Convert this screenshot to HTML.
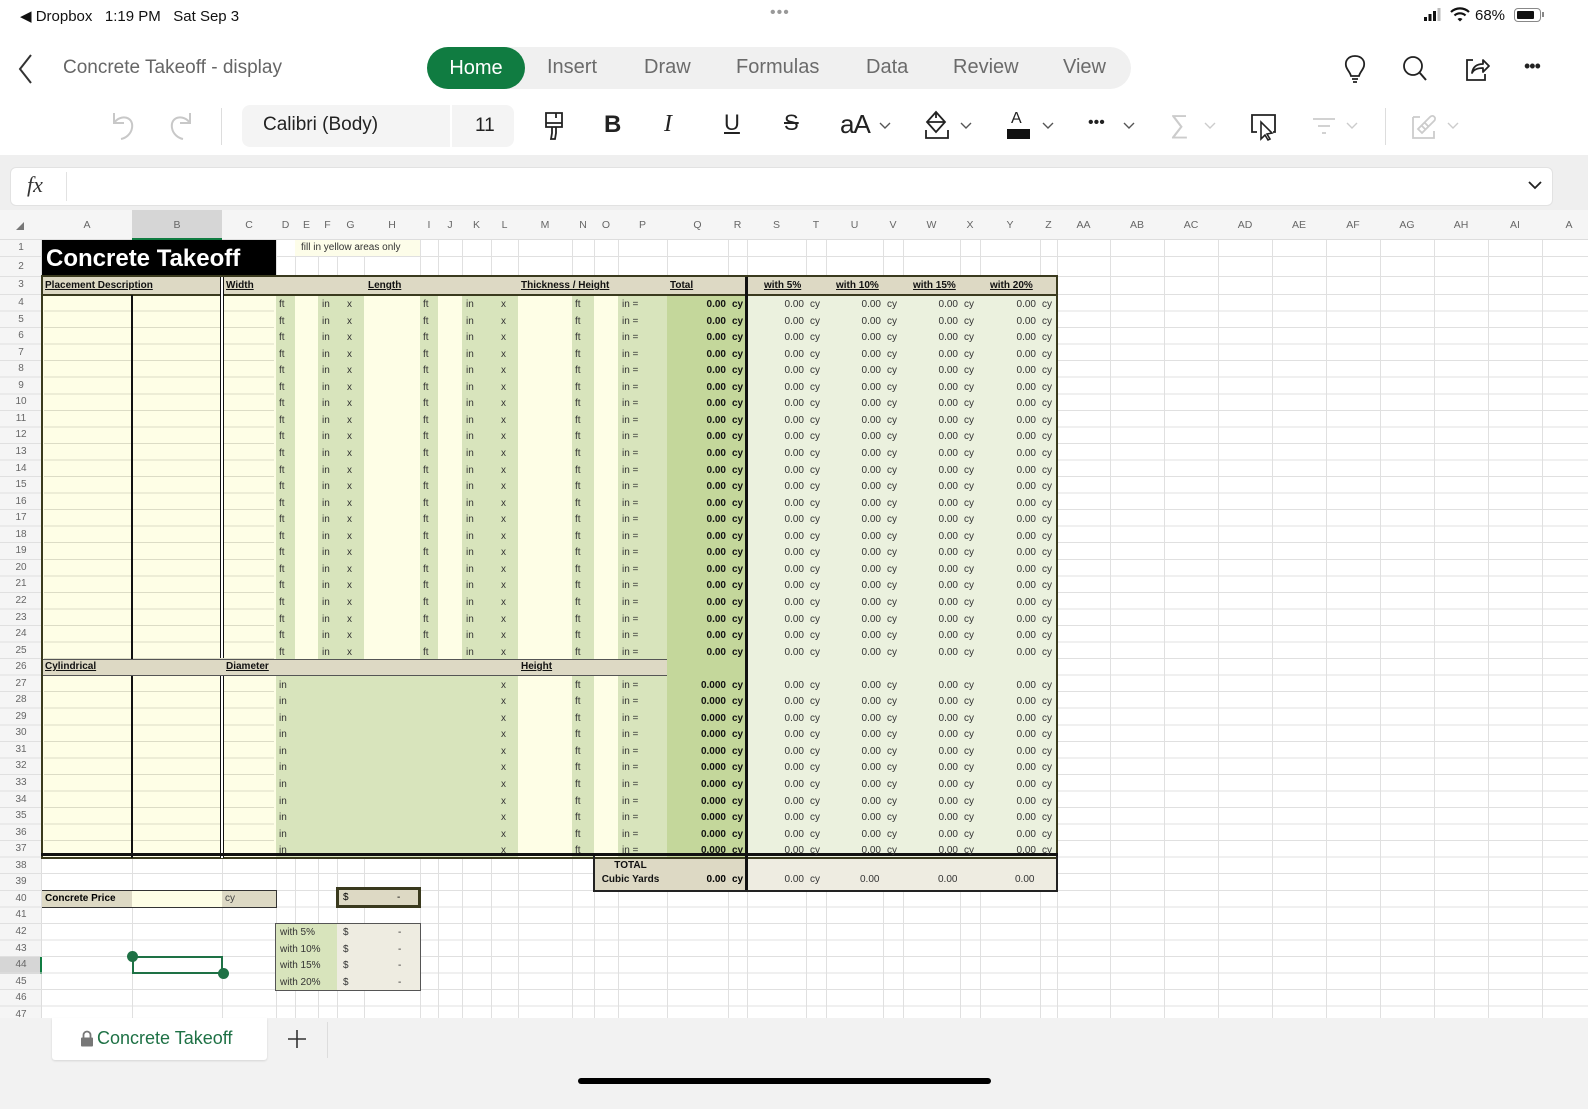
<!DOCTYPE html>
<html><head><meta charset="utf-8">
<style>
*{margin:0;padding:0;box-sizing:border-box}
body{width:1588px;height:1109px;position:relative;overflow:hidden;background:#fff;font-family:"Liberation Sans",sans-serif}
.abs{position:absolute}
.tb{position:absolute;top:56px;font-size:20px;color:#6b6b6b}
.hd{position:absolute;top:210px;height:30px;background:#f5f5f5;border-bottom:1px solid #ddd}
.cl{position:absolute;top:219px;font-size:10.5px;color:#666;text-align:center}
.rn{position:absolute;left:0;width:42px;text-align:center;font-size:10px;color:#666;line-height:16px}
.vl{position:absolute;top:240px;width:1px;height:778px;background:#e0e0e0}
.f{position:absolute}
.r{position:absolute;left:0;width:1060px;height:16px;font-size:10px;color:#333;line-height:16px}
.r i{font-style:normal;position:absolute;top:1px}
.a{left:279px}.b{left:322px}.c{left:347px}.d{left:423px}.e{left:466px}.ff{left:501px}.g{left:575px}.h{left:622px}
.q{left:667px;width:59px;text-align:right;font-weight:bold;color:#111}.qc{left:732px;font-weight:bold;color:#111}
.s{left:747px;width:57px;text-align:right}.sc{left:810px}
.u{left:826px;width:55px;text-align:right}.uc{left:887px}
.w{left:903px;width:55px;text-align:right}.wc{left:964px}
.y{left:980px;width:56px;text-align:right}.yc{left:1042px}
.bh{font-size:10px;font-weight:bold;text-decoration:underline;position:absolute;color:#111}
</style></head><body>
<div class="abs" style="left:20px;top:7px;font-size:15px;color:#111">◀ Dropbox&nbsp;&nbsp; 1:19 PM&nbsp;&nbsp; Sat Sep 3</div>
<div class="abs" style="left:770px;top:4px;font-size:16px;color:#999;letter-spacing:1px">•••</div>
<div class="abs" style="left:1424px;top:8px;width:18px;height:14px">
<svg width="18" height="14"><rect x="0" y="9" width="3" height="4" fill="#111"/><rect x="4.5" y="6" width="3" height="7" fill="#111"/><rect x="9" y="3" width="3" height="10" fill="#111"/><rect x="13.5" y="0" width="3" height="13" fill="#bbb"/></svg></div>
<div class="abs" style="left:1450px;top:6px"><svg width="20" height="16"><path d="M1 6 A13 13 0 0 1 19 6" stroke="#111" stroke-width="2.2" fill="none"/><path d="M4.5 9.5 A8 8 0 0 1 15.5 9.5" stroke="#111" stroke-width="2.2" fill="none"/><path d="M7.5 13 L10 15.5 L12.5 13 A4 4 0 0 0 7.5 13Z" fill="#111"/></svg></div>
<div class="abs" style="left:1475px;top:7px;font-size:15px;color:#111">68%</div>
<div class="abs" style="left:1514px;top:8px;width:27px;height:14px;border:1.5px solid #888;border-radius:4px"><div style="margin:1.5px;width:17px;height:8px;background:#111;border-radius:1px"></div></div>
<div class="abs" style="left:1542px;top:12px;width:2px;height:5px;background:#888"></div>

<svg class="abs" style="left:16px;top:53px" width="20" height="32"><path d="M15 2 L4 16 L15 30" stroke="#333" stroke-width="2" fill="none"/></svg>
<div class="abs" style="left:63px;top:57px;font-size:19px;color:#666">Concrete Takeoff - display</div>
<div class="abs" style="left:427px;top:47px;width:704px;height:42px;border-radius:21px;background:#f0f0f0"></div>
<div class="abs" style="left:427px;top:47px;width:98px;height:42px;border-radius:21px;background:#107c41;color:#fff;font-size:20px;text-align:center;line-height:42px">Home</div>
<div class="tb" style="left:547px">Insert</div>
<div class="tb" style="left:644px">Draw</div>
<div class="tb" style="left:736px">Formulas</div>
<div class="tb" style="left:866px">Data</div>
<div class="tb" style="left:953px">Review</div>
<div class="tb" style="left:1063px">View</div>
<svg class="abs" style="left:1343px;top:54px" width="24" height="30"><path d="M12 2 C5 2 2 7 3 12 C4 16 7 18 8 22 L16 22 C17 18 20 16 21 12 C22 7 19 2 12 2Z M9 25 L15 25 M10 28 L14 28" stroke="#222" stroke-width="1.8" fill="none"/></svg>
<svg class="abs" style="left:1402px;top:55px" width="26" height="28"><circle cx="11" cy="11" r="9" stroke="#222" stroke-width="1.8" fill="none"/><path d="M17.5 17.5 L24 25" stroke="#222" stroke-width="2"/></svg>
<svg class="abs" style="left:1463px;top:55px" width="28" height="28"><path d="M10 5 L4 5 L4 25 L22 25 L22 19" stroke="#222" stroke-width="1.8" fill="none"/><path d="M9 18 C10 11 15 9 20 9 L20 5 L26 11 L20 17 L20 13 C15 13 11 14 9 18Z" stroke="#222" stroke-width="1.8" fill="none" stroke-linejoin="round"/></svg>
<div class="abs" style="left:1524px;top:56px;font-size:18px;color:#222;letter-spacing:-1px">•••</div>

<svg class="abs" style="left:108px;top:110px" width="30" height="32"><path d="M6 3 L6 13 L16 13 M6 13 C12 4 26 6 24 18 C23 24 18 28 13 29" stroke="#c8c8c8" stroke-width="2" fill="none"/></svg>
<svg class="abs" style="left:166px;top:110px" width="30" height="32"><path d="M24 3 L24 13 L14 13 M24 13 C18 4 4 6 6 18 C7 24 12 28 17 29" stroke="#c8c8c8" stroke-width="2" fill="none"/></svg>
<div class="abs" style="left:221px;top:108px;width:1px;height:37px;background:#ddd"></div>
<div class="abs" style="left:242px;top:105px;width:208px;height:42px;background:#f4f4f4;border-radius:8px 0 0 8px"></div>
<div class="abs" style="left:452px;top:105px;width:62px;height:42px;background:#f4f4f4;border-radius:0 8px 8px 0"></div>
<div class="abs" style="left:263px;top:114px;font-size:19px;color:#222">Calibri (Body)</div>
<div class="abs" style="left:475px;top:115px;font-size:19px;color:#222">11</div>
<svg class="abs" style="left:542px;top:111px" width="24" height="32"><path d="M4 2 L20 2 L20 16 L4 16Z M4 12 L20 12 M10 16 L10 22 L9 28 L13 28 L14 22 L14 16 M14 2 L14 7" stroke="#222" stroke-width="1.8" fill="none"/></svg>
<div class="abs" style="left:604px;top:111px;font-size:24px;font-weight:bold;color:#222">B</div>
<div class="abs" style="left:664px;top:111px;font-size:24px;font-style:italic;color:#222;font-family:'Liberation Serif',serif">I</div>
<div class="abs" style="left:724px;top:110px;font-size:22px;color:#222;text-decoration:underline">U</div>
<div class="abs" style="left:784px;top:110px;font-size:22px;color:#222;text-decoration:line-through">S</div>
<div class="abs" style="left:840px;top:109px;font-size:26px;color:#222;letter-spacing:-1px">aA</div>
<svg class="abs" style="left:879px;top:122px" width="12" height="8"><path d="M1 1 L6 6 L11 1" stroke="#555" stroke-width="1.4" fill="none"/></svg>
<svg class="abs" style="left:922px;top:108px" width="30" height="34"><path d="M14 4 L5 14 L14 24 L23 14Z M14 4 L14 10 M5 14 L23 14" stroke="#222" stroke-width="1.8" fill="none"/><path d="M4 22 L4 30 L26 30 L26 22" stroke="#222" stroke-width="1.8" fill="none"/></svg>
<svg class="abs" style="left:960px;top:122px" width="12" height="8"><path d="M1 1 L6 6 L11 1" stroke="#555" stroke-width="1.4" fill="none"/></svg>
<div class="abs" style="left:1011px;top:110px;font-size:16px;color:#222">A</div>
<div class="abs" style="left:1007px;top:129px;width:23px;height:10px;background:#111"></div>
<svg class="abs" style="left:1042px;top:122px" width="12" height="8"><path d="M1 1 L6 6 L11 1" stroke="#555" stroke-width="1.4" fill="none"/></svg>
<div class="abs" style="left:1088px;top:114px;font-size:16px;color:#222">•••</div>
<svg class="abs" style="left:1123px;top:122px" width="12" height="8"><path d="M1 1 L6 6 L11 1" stroke="#555" stroke-width="1.4" fill="none"/></svg>
<div class="abs" style="left:1170px;top:109px;font-size:26px;color:#ccc">∑</div>
<svg class="abs" style="left:1204px;top:122px" width="12" height="8"><path d="M1 1 L6 6 L11 1" stroke="#ccc" stroke-width="1.4" fill="none"/></svg>
<svg class="abs" style="left:1249px;top:112px" width="30" height="30"><path d="M8 20 L3 20 L3 3 L26 3 L26 20 L24 20" stroke="#222" stroke-width="1.8" fill="none"/><path d="M12 10 L12 27 L16 23 L19 28 L21 27 L18 22 L23 21Z" stroke="#222" stroke-width="1.6" fill="#fff"/></svg>
<svg class="abs" style="left:1311px;top:116px" width="26" height="22"><path d="M2 3 L24 3 M7 10 L19 10 M11 17 L15 17" stroke="#ccc" stroke-width="1.8"/></svg>
<svg class="abs" style="left:1346px;top:122px" width="12" height="8"><path d="M1 1 L6 6 L11 1" stroke="#ccc" stroke-width="1.4" fill="none"/></svg>
<div class="abs" style="left:1385px;top:108px;width:1px;height:37px;background:#ddd"></div>
<svg class="abs" style="left:1410px;top:111px" width="30" height="30"><path d="M3 6 L3 27 L24 27 L24 20 M3 6 L10 6" stroke="#ccc" stroke-width="1.8" fill="none"/><path d="M8 18 L20 6 C23 3 27 7 24 10 L12 22Z M11 14 L16 19 M14 11 L19 16" stroke="#ccc" stroke-width="1.8" fill="none"/></svg>
<svg class="abs" style="left:1447px;top:122px" width="12" height="8"><path d="M1 1 L6 6 L11 1" stroke="#ccc" stroke-width="1.4" fill="none"/></svg>

<div class="abs" style="left:0;top:155px;width:1588px;height:55px;background:#efefef"></div>
<div class="abs" style="left:10px;top:167px;width:1543px;height:39px;background:#fff;border:1px solid #e2e2e2;border-radius:6px"></div>
<div class="abs" style="left:66px;top:172px;width:1px;height:29px;background:#e2e2e2"></div>
<div class="abs" style="left:27px;top:172px;font-size:22px;font-style:italic;font-family:'Liberation Serif',serif;color:#333">fx</div>
<svg class="abs" style="left:1527px;top:179px" width="16" height="12"><path d="M2 3 L8 9 L14 3" stroke="#222" stroke-width="1.8" fill="none"/></svg>

<div class="hd" style="left:0;width:1588px"></div>
<div class="abs" style="left:132px;top:210px;width:90px;height:30px;background:#d6d6d6;border-bottom:2px solid #107c41"></div>
<svg class="abs" style="left:15px;top:221px" width="10" height="10"><path d="M9 1 L9 9 L1 9Z" fill="#777"/></svg>
<div class="cl" style="left:42px;width:90px">A</div><div class="cl" style="left:132px;width:90px">B</div><div class="cl" style="left:222px;width:54px">C</div><div class="cl" style="left:276px;width:19px">D</div><div class="cl" style="left:295px;width:23px">E</div><div class="cl" style="left:318px;width:19px">F</div><div class="cl" style="left:337px;width:27px">G</div><div class="cl" style="left:364px;width:56px">H</div><div class="cl" style="left:420px;width:18px">I</div><div class="cl" style="left:438px;width:24px">J</div><div class="cl" style="left:462px;width:29px">K</div><div class="cl" style="left:491px;width:27px">L</div><div class="cl" style="left:518px;width:54px">M</div><div class="cl" style="left:572px;width:22px">N</div><div class="cl" style="left:594px;width:24px">O</div><div class="cl" style="left:618px;width:49px">P</div><div class="cl" style="left:667px;width:61px">Q</div><div class="cl" style="left:728px;width:19px">R</div><div class="cl" style="left:747px;width:59px">S</div><div class="cl" style="left:806px;width:20px">T</div><div class="cl" style="left:826px;width:57px">U</div><div class="cl" style="left:883px;width:20px">V</div><div class="cl" style="left:903px;width:57px">W</div><div class="cl" style="left:960px;width:20px">X</div><div class="cl" style="left:980px;width:60px">Y</div><div class="cl" style="left:1040px;width:17px">Z</div><div class="cl" style="left:1057px;width:53px">AA</div><div class="cl" style="left:1110px;width:54px">AB</div><div class="cl" style="left:1164px;width:54px">AC</div><div class="cl" style="left:1218px;width:54px">AD</div><div class="cl" style="left:1272px;width:54px">AE</div><div class="cl" style="left:1326px;width:54px">AF</div><div class="cl" style="left:1380px;width:54px">AG</div><div class="cl" style="left:1434px;width:54px">AH</div><div class="cl" style="left:1488px;width:54px">AI</div><div class="cl" style="left:1542px;width:54px">A</div>

<div class="abs" style="left:0;top:240px;width:42px;height:778px;background:#f5f5f5;border-right:1px solid #ddd"></div>
<div class="abs" style="left:0;top:957px;width:42px;height:17px;background:#d6d6d6;border-right:2px solid #107c41"></div>

<div class="abs" style="left:0;top:256px;width:1588px;height:1px;background:#e0e0e0"></div>
<div class="abs" style="left:0;top:276px;width:1588px;height:1px;background:#e0e0e0"></div>
<div class="abs" style="left:0;top:294px;width:1588px;height:724px;background:repeating-linear-gradient(to bottom,#e0e0e0 0,#e0e0e0 1px,transparent 1px,transparent 16.55px)"></div>
<div class="vl" style="left:132px"></div><div class="vl" style="left:222px"></div><div class="vl" style="left:276px"></div><div class="vl" style="left:295px"></div><div class="vl" style="left:318px"></div><div class="vl" style="left:337px"></div><div class="vl" style="left:364px"></div><div class="vl" style="left:420px"></div><div class="vl" style="left:438px"></div><div class="vl" style="left:462px"></div><div class="vl" style="left:491px"></div><div class="vl" style="left:518px"></div><div class="vl" style="left:572px"></div><div class="vl" style="left:594px"></div><div class="vl" style="left:618px"></div><div class="vl" style="left:667px"></div><div class="vl" style="left:728px"></div><div class="vl" style="left:747px"></div><div class="vl" style="left:806px"></div><div class="vl" style="left:826px"></div><div class="vl" style="left:883px"></div><div class="vl" style="left:903px"></div><div class="vl" style="left:960px"></div><div class="vl" style="left:980px"></div><div class="vl" style="left:1040px"></div><div class="vl" style="left:1057px"></div><div class="vl" style="left:1110px"></div><div class="vl" style="left:1164px"></div><div class="vl" style="left:1218px"></div><div class="vl" style="left:1272px"></div><div class="vl" style="left:1326px"></div><div class="vl" style="left:1380px"></div><div class="vl" style="left:1434px"></div><div class="vl" style="left:1488px"></div><div class="vl" style="left:1542px"></div>

<div class="rn" style="top:240px">1</div><div class="rn" style="top:259px">2</div><div class="rn" style="top:277px">3</div>
<div class="rn" style="top:295px">4</div><div class="rn" style="top:311.6px">5</div><div class="rn" style="top:328.1px">6</div><div class="rn" style="top:344.7px">7</div><div class="rn" style="top:361.2px">8</div><div class="rn" style="top:377.8px">9</div><div class="rn" style="top:394.3px">10</div><div class="rn" style="top:410.9px">11</div><div class="rn" style="top:427.4px">12</div><div class="rn" style="top:444px">13</div><div class="rn" style="top:460.5px">14</div><div class="rn" style="top:477.1px">15</div><div class="rn" style="top:493.6px">16</div><div class="rn" style="top:510.2px">17</div><div class="rn" style="top:526.7px">18</div><div class="rn" style="top:543.3px">19</div><div class="rn" style="top:559.8px">20</div><div class="rn" style="top:576.4px">21</div><div class="rn" style="top:592.9px">22</div><div class="rn" style="top:609.5px">23</div><div class="rn" style="top:626px">24</div><div class="rn" style="top:642.6px">25</div><div class="rn" style="top:659.1px">26</div><div class="rn" style="top:675.7px">27</div><div class="rn" style="top:692.2px">28</div><div class="rn" style="top:708.8px">29</div><div class="rn" style="top:725.3px">30</div><div class="rn" style="top:741.9px">31</div><div class="rn" style="top:758.4px">32</div><div class="rn" style="top:775px">33</div><div class="rn" style="top:791.5px">34</div><div class="rn" style="top:808.1px">35</div><div class="rn" style="top:824.6px">36</div><div class="rn" style="top:841.2px">37</div><div class="rn" style="top:857.7px">38</div><div class="rn" style="top:874.3px">39</div><div class="rn" style="top:890.8px">40</div><div class="rn" style="top:907.4px">41</div><div class="rn" style="top:923.9px">42</div><div class="rn" style="top:940.5px">43</div><div class="rn" style="top:957px">44</div><div class="rn" style="top:973.6px">45</div><div class="rn" style="top:990.1px">46</div><div class="rn" style="top:1006.7px">47</div>

<div class="f" style="left:42px;top:240px;width:234px;height:35px;background:#000;color:#fff;font-weight:bold;font-size:24px;line-height:38px;padding-left:4px">Concrete Takeoff</div>
<div class="f" style="left:295px;top:240px;width:125px;height:16px;background:#fdfde9;font-size:10px;line-height:16px;padding-left:6px;color:#333">fill in yellow areas only</div>

<div class="f" style="left:42px;top:295px;width:234px;height:364px;background:#fefee6"></div>
<div class="f" style="left:276px;top:295px;width:19px;height:364px;background:#d8e4bc"></div>
<div class="f" style="left:295px;top:295px;width:23px;height:364px;background:#fefee6"></div>
<div class="f" style="left:318px;top:295px;width:46px;height:364px;background:#d8e4bc"></div>
<div class="f" style="left:364px;top:295px;width:56px;height:364px;background:#fefee6"></div>
<div class="f" style="left:420px;top:295px;width:18px;height:364px;background:#d8e4bc"></div>
<div class="f" style="left:438px;top:295px;width:24px;height:364px;background:#fefee6"></div>
<div class="f" style="left:462px;top:295px;width:56px;height:364px;background:#d8e4bc"></div>
<div class="f" style="left:518px;top:295px;width:54px;height:364px;background:#fefee6"></div>
<div class="f" style="left:572px;top:295px;width:22px;height:364px;background:#d8e4bc"></div>
<div class="f" style="left:594px;top:295px;width:24px;height:364px;background:#fefee6"></div>
<div class="f" style="left:618px;top:295px;width:49px;height:364px;background:#d8e4bc"></div>
<div class="f" style="left:42px;top:676px;width:234px;height:182px;background:#fefee6"></div>
<div class="f" style="left:276px;top:676px;width:242px;height:182px;background:#d8e4bc"></div>
<div class="f" style="left:518px;top:676px;width:54px;height:182px;background:#fefee6"></div>
<div class="f" style="left:572px;top:676px;width:22px;height:182px;background:#d8e4bc"></div>
<div class="f" style="left:594px;top:676px;width:24px;height:182px;background:#fefee6"></div>
<div class="f" style="left:618px;top:676px;width:49px;height:182px;background:#d8e4bc"></div>
<div class="f" style="left:44px;top:295px;width:230px;height:560px;background:repeating-linear-gradient(to bottom,transparent 0,transparent 15.55px,rgba(120,120,100,.25) 15.55px,rgba(120,120,100,.25) 16.55px)"></div>
<div class="f" style="left:667px;top:295px;width:80px;height:563px;background:#c4d79b"></div>
<div class="f" style="left:747px;top:295px;width:310px;height:563px;background:#ebf1de"></div>
<div class="f" style="left:42px;top:277px;width:1015px;height:18px;background:#ddd9c4"></div>
<div class="bh" style="left:45px;top:280px">Placement Description</div>
<div class="bh" style="left:226px;top:280px">Width</div>
<div class="bh" style="left:368px;top:280px">Length</div>
<div class="bh" style="left:521px;top:280px">Thickness / Height</div>
<div class="bh" style="left:670px;top:280px">Total</div>
<div class="bh" style="left:764px;top:280px">with 5%</div>
<div class="bh" style="left:836px;top:280px">with 10%</div>
<div class="bh" style="left:913px;top:280px">with 15%</div>
<div class="bh" style="left:990px;top:280px">with 20%</div>
<div class="f" style="left:42px;top:659px;width:625px;height:17px;background:#ddd9c4;border-top:1px solid #555;border-bottom:1px solid #555"></div>
<div class="bh" style="left:45px;top:661px">Cylindrical</div>
<div class="bh" style="left:226px;top:661px">Diameter</div>
<div class="bh" style="left:521px;top:661px">Height</div>
<div class="f" style="left:594px;top:858px;width:463px;height:33px;background:#eeece1"></div>
<div class="f" style="left:594px;top:858px;width:73px;height:33px;background:#ddd9c4"></div>
<div class="f" style="left:667px;top:858px;width:80px;height:33px;background:#ddd9c4"></div>
<div class="abs" style="left:594px;top:859px;width:73px;text-align:center;font-size:10px;font-weight:bold;line-height:14px;color:#111">TOTAL<br>Cubic Yards</div>
<div class="abs" style="left:667px;top:874px;width:59px;text-align:right;font-size:10px;font-weight:bold">0.00</div>
<div class="abs" style="left:732px;top:874px;font-size:10px;font-weight:bold">cy</div>
<div class="abs" style="left:747px;top:874px;width:57px;text-align:right;font-size:10px;color:#333">0.00</div>
<div class="abs" style="left:810px;top:874px;font-size:10px;color:#333">cy</div>
<div class="abs" style="left:860px;top:874px;font-size:10px;color:#333">0.00</div>
<div class="abs" style="left:938px;top:874px;font-size:10px;color:#333">0.00</div>
<div class="abs" style="left:1015px;top:874px;font-size:10px;color:#333">0.00</div>

<div class="f" style="left:41px;top:275px;width:1017px;height:584px;border:2px solid #3a3a1e"></div>
<div class="f" style="left:41px;top:294px;width:1017px;height:2px;background:#3a3a1e"></div>
<div class="f" style="left:131px;top:295px;width:2px;height:364px;background:#111"></div>
<div class="f" style="left:131px;top:676px;width:2px;height:182px;background:#111"></div>
<div class="f" style="left:220px;top:277px;width:4px;height:381px;background:linear-gradient(to right,#111 0,#111 1px,#fff 1px,#fff 3px,#111 3px)"></div>
<div class="f" style="left:220px;top:676px;width:4px;height:182px;background:linear-gradient(to right,#111 0,#111 1px,#fff 1px,#fff 3px,#111 3px)"></div>
<div class="f" style="left:745px;top:277px;width:3px;height:614px;background:#111"></div>
<div class="f" style="left:41px;top:853px;width:1017px;height:3px;background:#111"></div>
<div class="f" style="left:593px;top:856px;width:465px;height:36px;border:2px solid #222;border-top:none"></div>

<div class="f" style="left:42px;top:891px;width:90px;height:16px;background:#ddd9c4;font-size:10px;font-weight:bold;line-height:16px;padding-left:3px">Concrete Price</div>
<div class="f" style="left:132px;top:891px;width:90px;height:16px;background:#fefee6"></div>
<div class="f" style="left:222px;top:891px;width:54px;height:16px;background:#ddd9c4;font-size:10px;line-height:16px;padding-left:3px;color:#444">cy</div>
<div class="f" style="left:42px;top:890px;width:235px;height:18px;border-top:1px solid #333;border-bottom:1px solid #333;border-right:1px solid #333"></div>
<div class="f" style="left:336px;top:887px;width:85px;height:21px;background:#ddd9c4;border:3px solid #3a3a1e;font-size:10px;line-height:15px;padding-left:4px">$<span style="position:absolute;left:58px">-</span></div>
<div class="f" style="left:276px;top:924px;width:61px;height:66px;background:#d8e4bc"></div>
<div class="f" style="left:337px;top:924px;width:83px;height:66px;background:#eeece1"></div>
<div class="f" style="left:275px;top:923px;width:146px;height:68px;border:1px solid #555"></div>
<div class="abs" style="left:280px;top:925px;font-size:10px;line-height:16.55px;color:#333">with 5%<br>with 10%<br>with 15%<br>with 20%</div>
<div class="abs" style="left:343px;top:925px;font-size:10px;line-height:16.55px;color:#333">$<br>$<br>$<br>$</div>
<div class="abs" style="left:398px;top:925px;font-size:10px;line-height:16.55px;color:#333">-<br>-<br>-<br>-</div>
<div class="f" style="left:132px;top:956px;width:91px;height:18px;border:2px solid #1e7145"></div>
<div class="f" style="left:127px;top:951px;width:11px;height:11px;border-radius:50%;background:#1e7145"></div>
<div class="f" style="left:218px;top:968px;width:11px;height:11px;border-radius:50%;background:#1e7145"></div>

<div class="r" style="top:296px"><i class=a>ft</i><i class=b>in</i><i class=c>x</i><i class=d>ft</i><i class=e>in</i><i class=ff>x</i><i class=g>ft</i><i class=h>in =</i><i class=q>0.00</i><i class=qc>cy</i><i class=s>0.00</i><i class=sc>cy</i><i class=u>0.00</i><i class=uc>cy</i><i class=w>0.00</i><i class=wc>cy</i><i class=y>0.00</i><i class=yc>cy</i></div>
<div class="r" style="top:312.6px"><i class=a>ft</i><i class=b>in</i><i class=c>x</i><i class=d>ft</i><i class=e>in</i><i class=ff>x</i><i class=g>ft</i><i class=h>in =</i><i class=q>0.00</i><i class=qc>cy</i><i class=s>0.00</i><i class=sc>cy</i><i class=u>0.00</i><i class=uc>cy</i><i class=w>0.00</i><i class=wc>cy</i><i class=y>0.00</i><i class=yc>cy</i></div>
<div class="r" style="top:329.1px"><i class=a>ft</i><i class=b>in</i><i class=c>x</i><i class=d>ft</i><i class=e>in</i><i class=ff>x</i><i class=g>ft</i><i class=h>in =</i><i class=q>0.00</i><i class=qc>cy</i><i class=s>0.00</i><i class=sc>cy</i><i class=u>0.00</i><i class=uc>cy</i><i class=w>0.00</i><i class=wc>cy</i><i class=y>0.00</i><i class=yc>cy</i></div>
<div class="r" style="top:345.7px"><i class=a>ft</i><i class=b>in</i><i class=c>x</i><i class=d>ft</i><i class=e>in</i><i class=ff>x</i><i class=g>ft</i><i class=h>in =</i><i class=q>0.00</i><i class=qc>cy</i><i class=s>0.00</i><i class=sc>cy</i><i class=u>0.00</i><i class=uc>cy</i><i class=w>0.00</i><i class=wc>cy</i><i class=y>0.00</i><i class=yc>cy</i></div>
<div class="r" style="top:362.2px"><i class=a>ft</i><i class=b>in</i><i class=c>x</i><i class=d>ft</i><i class=e>in</i><i class=ff>x</i><i class=g>ft</i><i class=h>in =</i><i class=q>0.00</i><i class=qc>cy</i><i class=s>0.00</i><i class=sc>cy</i><i class=u>0.00</i><i class=uc>cy</i><i class=w>0.00</i><i class=wc>cy</i><i class=y>0.00</i><i class=yc>cy</i></div>
<div class="r" style="top:378.8px"><i class=a>ft</i><i class=b>in</i><i class=c>x</i><i class=d>ft</i><i class=e>in</i><i class=ff>x</i><i class=g>ft</i><i class=h>in =</i><i class=q>0.00</i><i class=qc>cy</i><i class=s>0.00</i><i class=sc>cy</i><i class=u>0.00</i><i class=uc>cy</i><i class=w>0.00</i><i class=wc>cy</i><i class=y>0.00</i><i class=yc>cy</i></div>
<div class="r" style="top:395.3px"><i class=a>ft</i><i class=b>in</i><i class=c>x</i><i class=d>ft</i><i class=e>in</i><i class=ff>x</i><i class=g>ft</i><i class=h>in =</i><i class=q>0.00</i><i class=qc>cy</i><i class=s>0.00</i><i class=sc>cy</i><i class=u>0.00</i><i class=uc>cy</i><i class=w>0.00</i><i class=wc>cy</i><i class=y>0.00</i><i class=yc>cy</i></div>
<div class="r" style="top:411.9px"><i class=a>ft</i><i class=b>in</i><i class=c>x</i><i class=d>ft</i><i class=e>in</i><i class=ff>x</i><i class=g>ft</i><i class=h>in =</i><i class=q>0.00</i><i class=qc>cy</i><i class=s>0.00</i><i class=sc>cy</i><i class=u>0.00</i><i class=uc>cy</i><i class=w>0.00</i><i class=wc>cy</i><i class=y>0.00</i><i class=yc>cy</i></div>
<div class="r" style="top:428.4px"><i class=a>ft</i><i class=b>in</i><i class=c>x</i><i class=d>ft</i><i class=e>in</i><i class=ff>x</i><i class=g>ft</i><i class=h>in =</i><i class=q>0.00</i><i class=qc>cy</i><i class=s>0.00</i><i class=sc>cy</i><i class=u>0.00</i><i class=uc>cy</i><i class=w>0.00</i><i class=wc>cy</i><i class=y>0.00</i><i class=yc>cy</i></div>
<div class="r" style="top:445px"><i class=a>ft</i><i class=b>in</i><i class=c>x</i><i class=d>ft</i><i class=e>in</i><i class=ff>x</i><i class=g>ft</i><i class=h>in =</i><i class=q>0.00</i><i class=qc>cy</i><i class=s>0.00</i><i class=sc>cy</i><i class=u>0.00</i><i class=uc>cy</i><i class=w>0.00</i><i class=wc>cy</i><i class=y>0.00</i><i class=yc>cy</i></div>
<div class="r" style="top:461.5px"><i class=a>ft</i><i class=b>in</i><i class=c>x</i><i class=d>ft</i><i class=e>in</i><i class=ff>x</i><i class=g>ft</i><i class=h>in =</i><i class=q>0.00</i><i class=qc>cy</i><i class=s>0.00</i><i class=sc>cy</i><i class=u>0.00</i><i class=uc>cy</i><i class=w>0.00</i><i class=wc>cy</i><i class=y>0.00</i><i class=yc>cy</i></div>
<div class="r" style="top:478.1px"><i class=a>ft</i><i class=b>in</i><i class=c>x</i><i class=d>ft</i><i class=e>in</i><i class=ff>x</i><i class=g>ft</i><i class=h>in =</i><i class=q>0.00</i><i class=qc>cy</i><i class=s>0.00</i><i class=sc>cy</i><i class=u>0.00</i><i class=uc>cy</i><i class=w>0.00</i><i class=wc>cy</i><i class=y>0.00</i><i class=yc>cy</i></div>
<div class="r" style="top:494.6px"><i class=a>ft</i><i class=b>in</i><i class=c>x</i><i class=d>ft</i><i class=e>in</i><i class=ff>x</i><i class=g>ft</i><i class=h>in =</i><i class=q>0.00</i><i class=qc>cy</i><i class=s>0.00</i><i class=sc>cy</i><i class=u>0.00</i><i class=uc>cy</i><i class=w>0.00</i><i class=wc>cy</i><i class=y>0.00</i><i class=yc>cy</i></div>
<div class="r" style="top:511.2px"><i class=a>ft</i><i class=b>in</i><i class=c>x</i><i class=d>ft</i><i class=e>in</i><i class=ff>x</i><i class=g>ft</i><i class=h>in =</i><i class=q>0.00</i><i class=qc>cy</i><i class=s>0.00</i><i class=sc>cy</i><i class=u>0.00</i><i class=uc>cy</i><i class=w>0.00</i><i class=wc>cy</i><i class=y>0.00</i><i class=yc>cy</i></div>
<div class="r" style="top:527.7px"><i class=a>ft</i><i class=b>in</i><i class=c>x</i><i class=d>ft</i><i class=e>in</i><i class=ff>x</i><i class=g>ft</i><i class=h>in =</i><i class=q>0.00</i><i class=qc>cy</i><i class=s>0.00</i><i class=sc>cy</i><i class=u>0.00</i><i class=uc>cy</i><i class=w>0.00</i><i class=wc>cy</i><i class=y>0.00</i><i class=yc>cy</i></div>
<div class="r" style="top:544.3px"><i class=a>ft</i><i class=b>in</i><i class=c>x</i><i class=d>ft</i><i class=e>in</i><i class=ff>x</i><i class=g>ft</i><i class=h>in =</i><i class=q>0.00</i><i class=qc>cy</i><i class=s>0.00</i><i class=sc>cy</i><i class=u>0.00</i><i class=uc>cy</i><i class=w>0.00</i><i class=wc>cy</i><i class=y>0.00</i><i class=yc>cy</i></div>
<div class="r" style="top:560.8px"><i class=a>ft</i><i class=b>in</i><i class=c>x</i><i class=d>ft</i><i class=e>in</i><i class=ff>x</i><i class=g>ft</i><i class=h>in =</i><i class=q>0.00</i><i class=qc>cy</i><i class=s>0.00</i><i class=sc>cy</i><i class=u>0.00</i><i class=uc>cy</i><i class=w>0.00</i><i class=wc>cy</i><i class=y>0.00</i><i class=yc>cy</i></div>
<div class="r" style="top:577.4px"><i class=a>ft</i><i class=b>in</i><i class=c>x</i><i class=d>ft</i><i class=e>in</i><i class=ff>x</i><i class=g>ft</i><i class=h>in =</i><i class=q>0.00</i><i class=qc>cy</i><i class=s>0.00</i><i class=sc>cy</i><i class=u>0.00</i><i class=uc>cy</i><i class=w>0.00</i><i class=wc>cy</i><i class=y>0.00</i><i class=yc>cy</i></div>
<div class="r" style="top:593.9px"><i class=a>ft</i><i class=b>in</i><i class=c>x</i><i class=d>ft</i><i class=e>in</i><i class=ff>x</i><i class=g>ft</i><i class=h>in =</i><i class=q>0.00</i><i class=qc>cy</i><i class=s>0.00</i><i class=sc>cy</i><i class=u>0.00</i><i class=uc>cy</i><i class=w>0.00</i><i class=wc>cy</i><i class=y>0.00</i><i class=yc>cy</i></div>
<div class="r" style="top:610.5px"><i class=a>ft</i><i class=b>in</i><i class=c>x</i><i class=d>ft</i><i class=e>in</i><i class=ff>x</i><i class=g>ft</i><i class=h>in =</i><i class=q>0.00</i><i class=qc>cy</i><i class=s>0.00</i><i class=sc>cy</i><i class=u>0.00</i><i class=uc>cy</i><i class=w>0.00</i><i class=wc>cy</i><i class=y>0.00</i><i class=yc>cy</i></div>
<div class="r" style="top:627px"><i class=a>ft</i><i class=b>in</i><i class=c>x</i><i class=d>ft</i><i class=e>in</i><i class=ff>x</i><i class=g>ft</i><i class=h>in =</i><i class=q>0.00</i><i class=qc>cy</i><i class=s>0.00</i><i class=sc>cy</i><i class=u>0.00</i><i class=uc>cy</i><i class=w>0.00</i><i class=wc>cy</i><i class=y>0.00</i><i class=yc>cy</i></div>
<div class="r" style="top:643.6px"><i class=a>ft</i><i class=b>in</i><i class=c>x</i><i class=d>ft</i><i class=e>in</i><i class=ff>x</i><i class=g>ft</i><i class=h>in =</i><i class=q>0.00</i><i class=qc>cy</i><i class=s>0.00</i><i class=sc>cy</i><i class=u>0.00</i><i class=uc>cy</i><i class=w>0.00</i><i class=wc>cy</i><i class=y>0.00</i><i class=yc>cy</i></div>

<div class="r" style="top:676.7px"><i class=a>in</i><i class=ff>x</i><i class=g>ft</i><i class=h>in =</i><i class=q>0.000</i><i class=qc>cy</i><i class=s>0.00</i><i class=sc>cy</i><i class=u>0.00</i><i class=uc>cy</i><i class=w>0.00</i><i class=wc>cy</i><i class=y>0.00</i><i class=yc>cy</i></div>
<div class="r" style="top:693.2px"><i class=a>in</i><i class=ff>x</i><i class=g>ft</i><i class=h>in =</i><i class=q>0.000</i><i class=qc>cy</i><i class=s>0.00</i><i class=sc>cy</i><i class=u>0.00</i><i class=uc>cy</i><i class=w>0.00</i><i class=wc>cy</i><i class=y>0.00</i><i class=yc>cy</i></div>
<div class="r" style="top:709.8px"><i class=a>in</i><i class=ff>x</i><i class=g>ft</i><i class=h>in =</i><i class=q>0.000</i><i class=qc>cy</i><i class=s>0.00</i><i class=sc>cy</i><i class=u>0.00</i><i class=uc>cy</i><i class=w>0.00</i><i class=wc>cy</i><i class=y>0.00</i><i class=yc>cy</i></div>
<div class="r" style="top:726.3px"><i class=a>in</i><i class=ff>x</i><i class=g>ft</i><i class=h>in =</i><i class=q>0.000</i><i class=qc>cy</i><i class=s>0.00</i><i class=sc>cy</i><i class=u>0.00</i><i class=uc>cy</i><i class=w>0.00</i><i class=wc>cy</i><i class=y>0.00</i><i class=yc>cy</i></div>
<div class="r" style="top:742.9px"><i class=a>in</i><i class=ff>x</i><i class=g>ft</i><i class=h>in =</i><i class=q>0.000</i><i class=qc>cy</i><i class=s>0.00</i><i class=sc>cy</i><i class=u>0.00</i><i class=uc>cy</i><i class=w>0.00</i><i class=wc>cy</i><i class=y>0.00</i><i class=yc>cy</i></div>
<div class="r" style="top:759.4px"><i class=a>in</i><i class=ff>x</i><i class=g>ft</i><i class=h>in =</i><i class=q>0.000</i><i class=qc>cy</i><i class=s>0.00</i><i class=sc>cy</i><i class=u>0.00</i><i class=uc>cy</i><i class=w>0.00</i><i class=wc>cy</i><i class=y>0.00</i><i class=yc>cy</i></div>
<div class="r" style="top:776px"><i class=a>in</i><i class=ff>x</i><i class=g>ft</i><i class=h>in =</i><i class=q>0.000</i><i class=qc>cy</i><i class=s>0.00</i><i class=sc>cy</i><i class=u>0.00</i><i class=uc>cy</i><i class=w>0.00</i><i class=wc>cy</i><i class=y>0.00</i><i class=yc>cy</i></div>
<div class="r" style="top:792.5px"><i class=a>in</i><i class=ff>x</i><i class=g>ft</i><i class=h>in =</i><i class=q>0.000</i><i class=qc>cy</i><i class=s>0.00</i><i class=sc>cy</i><i class=u>0.00</i><i class=uc>cy</i><i class=w>0.00</i><i class=wc>cy</i><i class=y>0.00</i><i class=yc>cy</i></div>
<div class="r" style="top:809.1px"><i class=a>in</i><i class=ff>x</i><i class=g>ft</i><i class=h>in =</i><i class=q>0.000</i><i class=qc>cy</i><i class=s>0.00</i><i class=sc>cy</i><i class=u>0.00</i><i class=uc>cy</i><i class=w>0.00</i><i class=wc>cy</i><i class=y>0.00</i><i class=yc>cy</i></div>
<div class="r" style="top:825.6px"><i class=a>in</i><i class=ff>x</i><i class=g>ft</i><i class=h>in =</i><i class=q>0.000</i><i class=qc>cy</i><i class=s>0.00</i><i class=sc>cy</i><i class=u>0.00</i><i class=uc>cy</i><i class=w>0.00</i><i class=wc>cy</i><i class=y>0.00</i><i class=yc>cy</i></div>
<div class="r" style="top:841.7px"><i class=a>in</i><i class=ff>x</i><i class=g>ft</i><i class=h>in =</i><i class=q>0.000</i><i class=qc>cy</i><i class=s>0.00</i><i class=sc>cy</i><i class=u>0.00</i><i class=uc>cy</i><i class=w>0.00</i><i class=wc>cy</i><i class=y>0.00</i><i class=yc>cy</i></div>

<div class="abs" style="left:0;top:1018px;width:1588px;height:91px;background:#f2f2f2"></div>
<div class="abs" style="left:52px;top:1018px;width:215px;height:42px;background:#fff;box-shadow:0 1px 2px rgba(0,0,0,.12);border-radius:0 0 3px 3px"></div>
<svg class="abs" style="left:80px;top:1030px" width="14" height="17"><path d="M3.5 8 L3.5 5 A3.5 3.5 0 0 1 10.5 5 L10.5 8" stroke="#777" stroke-width="1.8" fill="none"/><rect x="1" y="7.5" width="12" height="9" rx="1" fill="#777"/></svg>
<div class="abs" style="left:97px;top:1028px;font-size:18px;color:#1e7145">Concrete Takeoff</div>
<svg class="abs" style="left:287px;top:1029px" width="20" height="20"><path d="M10 1 L10 19 M1 10 L19 10" stroke="#333" stroke-width="1.6"/></svg>
<div class="abs" style="left:327px;top:1022px;width:1px;height:36px;background:#ddd"></div>
<div class="abs" style="left:578px;top:1078px;width:413px;height:6px;border-radius:3px;background:#000"></div>
</body></html>
